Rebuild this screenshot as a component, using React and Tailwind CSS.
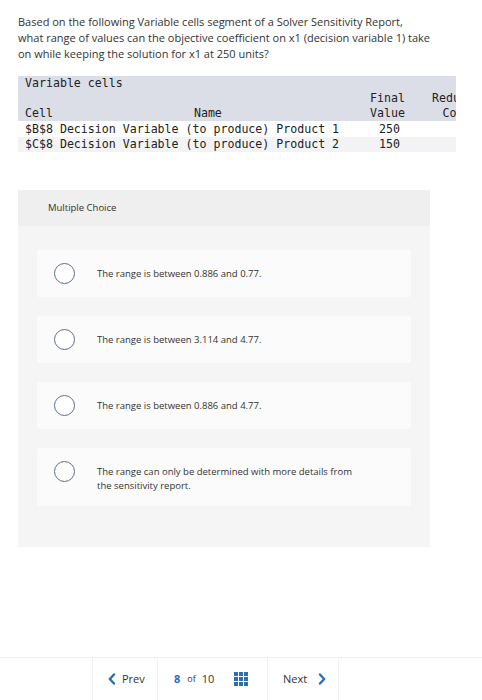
const options = [
  ["The range is between 0.886 and 0.77."],
  ["The range is between 3.114 and 4.77."],
  ["The range is between 0.886 and 4.77."],
  ["The range can only be determined with more details from", "the sensitivity report."],
];

const Radio = () => (
  <div className="w-[21px] h-[21px] shrink-0 rounded-full border-[1.5px] border-[#5d6f8c] bg-white" />
);

const Chevron = ({ dir }) => (
  <svg width="8" height="12" viewBox="0 0 8 12" className="shrink-0">
    <path
      d={dir === "left" ? "M6 1.5 1.8 6 6 10.5" : "M2 1.5 6.2 6 2 10.5"}
      fill="none"
      stroke="#2f6db3"
      strokeWidth="2.4"
      strokeLinecap="round"
      strokeLinejoin="round"
    />
  </svg>
);

const GridIcon = () => (
  <svg width="14" height="14" viewBox="0 0 14 14">
    {[0, 5, 10].map((y) =>
      [0, 5, 10].map((x) => <rect key={`${x}-${y}`} x={x} y={y} width="4" height="4" fill="#2f6db3" />)
    )}
  </svg>
);

export default function App() {
  return (
    <div className="w-[482px] h-[700px] bg-white flex flex-col font-['Open_Sans',sans-serif] text-[#333] overflow-hidden">
      <p className="mt-[14px] ml-[18px] text-[11px] leading-[16px] whitespace-nowrap">
        Based on the following Variable cells segment of a Solver Sensitivity Report,
        <br />
        what range of values can the objective coefficient on x1 (decision variable 1) take
        <br />
        on while keeping the solution for x1 at 250 units?
      </p>

      <div className="mt-[14px] ml-[18px] w-[438px] overflow-hidden font-['DejaVu_Sans_Mono',monospace] text-[11.6px] leading-[15px] text-[#222] whitespace-nowrap">
        <div className="bg-[#dcdee7] h-[45px]">
          <div className="pl-[7px]">Variable cells</div>
          <div className="flex items-end">
            <div className="w-[338px] shrink-0 flex pl-[7px]">
              <span>Cell</span>
              <span className="ml-[141px]">Name</span>
            </div>
            <div className="w-[74px] shrink-0 pl-[14px] flex flex-col">
              <span>Final</span>
              <span>Value</span>
            </div>
            <div className="shrink-0 pl-[2px] flex flex-col items-center">
              <span>Reduced</span>
              <span>Cost</span>
            </div>
          </div>
        </div>
        <div className="flex h-[16px] items-center bg-white">
          <div className="w-[338px] shrink-0 pl-[7px]">$B$8 Decision Variable (to produce) Product 1</div>
          <div className="w-[74px] shrink-0 pl-[23px]">250</div>
        </div>
        <div className="flex h-[15px] items-center bg-[#f3f3f6]">
          <div className="w-[338px] shrink-0 pl-[7px]">$C$8 Decision Variable (to produce) Product 2</div>
          <div className="w-[74px] shrink-0 pl-[23px]">150</div>
        </div>
      </div>

      <div className="mt-[38px] ml-[18px] w-[412px] bg-[#f5f5f5]">
        <div className="h-[36px] bg-[#efefef] flex items-center pl-[30px] text-[9.5px]">Multiple Choice</div>
        <div className="px-[19px] pt-[24px] pb-[41px] flex flex-col gap-[19px]">
          {options.map((lines, i) => (
            <div key={i} className="bg-[#fbfbfb] rounded-[2px] py-[13px] pl-[17px] flex items-start">
              <Radio />
              <div className="ml-[22px] mt-[3.5px] text-[9.5px] leading-[14px] text-[#333]">
                {lines.map((l) => (
                  <div key={l}>{l}</div>
                ))}
              </div>
            </div>
          ))}
        </div>
      </div>

      <div className="mt-auto h-[43px] border-t border-[#f0f0f0] flex text-[11px] text-[#333]">
        <div className="ml-[92px] w-[66px] border-l border-r border-[#f0f0f0] flex items-center pl-[15px] gap-[6px]">
          <Chevron dir="left" />
          <span>Prev</span>
        </div>
        <div className="w-[110px] border-r border-[#f0f0f0] flex items-center pl-[16px]">
          <span className="text-[#2f6db3] font-bold">8</span>
          <span className="ml-[7px] text-[9px]">of</span>
          <span className="ml-[6px]">10</span>
          <span className="ml-[20px]">
            <GridIcon />
          </span>
        </div>
        <div className="w-[71px] border-r border-[#f0f0f0] flex items-center pl-[15px] gap-[11px]">
          <span>Next</span>
          <Chevron dir="right" />
        </div>
      </div>
    </div>
  );
}
